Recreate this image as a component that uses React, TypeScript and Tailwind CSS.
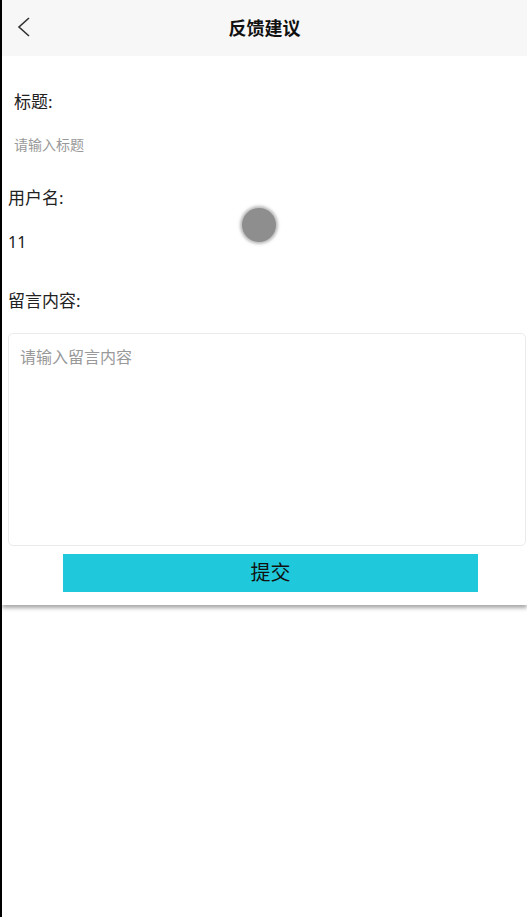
import { useState } from "react";

export default function App() {
    const [title, setTitle] = useState("");
    const [content, setContent] = useState("");

    return (
        <div
            className="relative min-h-[917px] w-[527px] border-l-2 border-black bg-white"
            style={{ fontFamily: '"Noto Sans", "Noto Sans CJK SC", sans-serif' }}
        >
            {/* Header */}
            <div className="relative flex h-[56px] items-center justify-center bg-[#f7f7f7]">
                <button className="absolute left-[10px] top-[11px] p-1 text-[#333]">
                    <svg width="16" height="24" viewBox="0 0 16 24" fill="none">
                        <path d="M13 3 L3 12 L13 21" stroke="#333" strokeWidth="1.6" />
                    </svg>
                </button>
                <h1 className="text-[18px] font-bold text-[#111]">反馈建议</h1>
            </div>

            {/* Form card */}
            <div className="flex flex-col bg-white pb-[13px] shadow-[0_3px_4px_rgba(0,0,0,0.35)]">
                <div className="mt-[34px] pl-[12px] text-[17px] leading-[24px] text-[#222]">标题:</div>
                <input
                    value={title}
                    onChange={(e) => setTitle(e.target.value)}
                    placeholder="请输入标题"
                    className="mt-[20px] ml-[12px] h-[20px] w-[400px] text-[14px] text-[#333] outline-none placeholder:text-[#999]"
                />

                <div className="mt-[32px] pl-[6px] text-[17px] leading-[24px] text-[#222]">用户名:</div>
                <div className="mt-[22px] pl-[6px] text-[16px] leading-[20px] text-[#222]">11</div>

                <div className="mt-[37px] pl-[6px] text-[17px] leading-[24px] text-[#222]">留言内容:</div>
                <div className="mt-[20px] pl-[6px] pr-[1px]">
                    <textarea
                        value={content}
                        onChange={(e) => setContent(e.target.value)}
                        placeholder="请输入留言内容"
                        className="block h-[213px] w-full resize-none rounded-[5px] border border-[#ebebeb] px-[11px] py-[12px] text-[16px] leading-[22px] text-[#333] outline-none placeholder:text-[#999]"
                    />
                </div>

                <div className="mt-[8px] flex justify-center">
                    <button className="ml-[12px] h-[38px] w-[415px] bg-[#1fc9db] text-[20px] text-[#111]">
                        提交
                    </button>
                </div>
            </div>

            {/* Touch indicator */}
            <div className="pointer-events-none absolute left-[240px] top-[208px] h-[34px] w-[34px] rounded-full bg-[#8e8e8e] shadow-[0_0_3px_2px_rgba(140,140,140,0.6)]" />
        </div>
    );
}
